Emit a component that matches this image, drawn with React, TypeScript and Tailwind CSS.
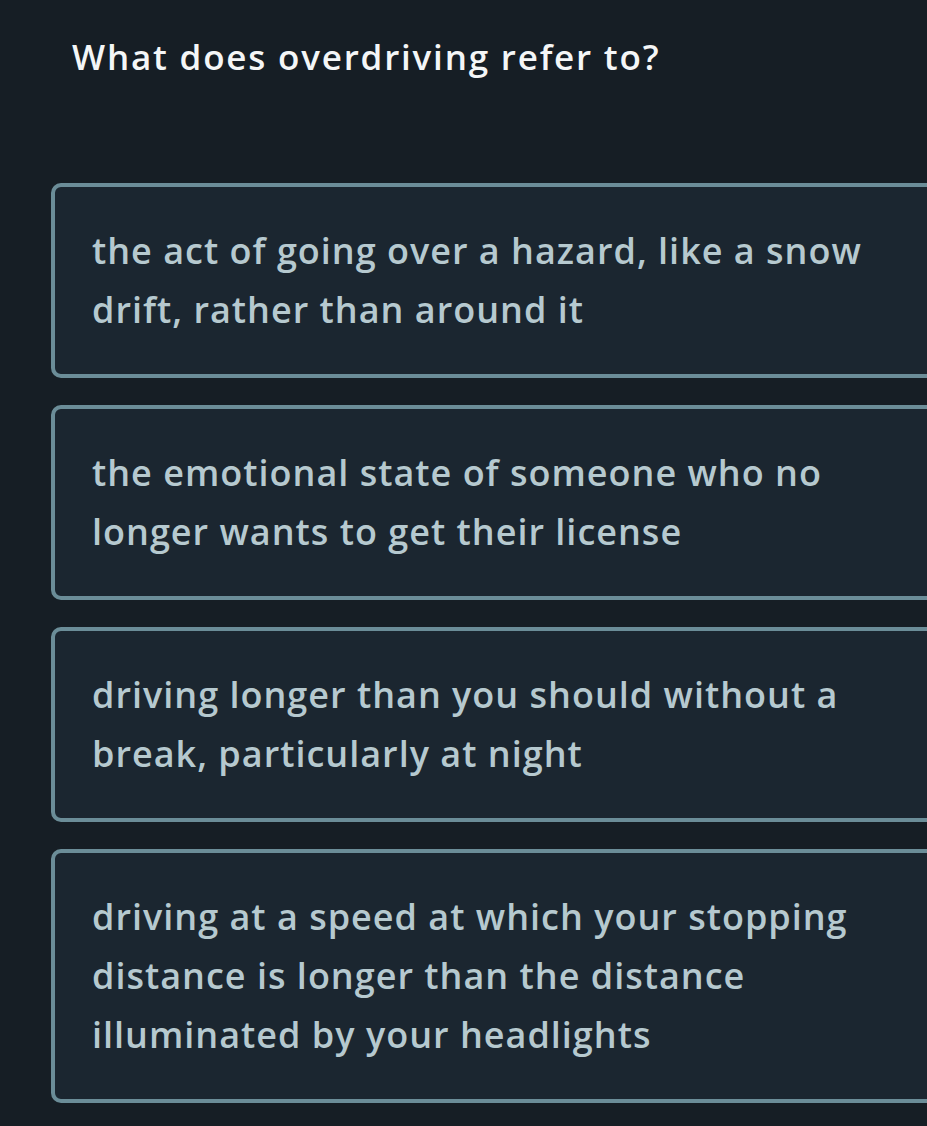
import React from "react";

const options: string[][] = [
  ["the act of going over a hazard, like a snow", "drift, rather than around it"],
  ["the emotional state of someone who no", "longer wants to get their license"],
  ["driving longer than you should without a", "break, particularly at night"],
  ["driving at a speed at which your stopping", "distance is longer than the distance", "illuminated by your headlights"],
];

export default function App() {
  return (
    <div
      className="min-h-screen w-full overflow-hidden bg-[#161e25] pl-[51px]"
      style={{ fontFamily: '"Open Sans", "Noto Sans", sans-serif' }}
    >
      <h1 className="pl-[21px] pt-[35px] text-[35px] leading-[44px] font-semibold tracking-[1.8px] text-[#f4f6f7] whitespace-nowrap">
        What does overdriving refer to?
      </h1>
      <div className="mt-[104px] flex flex-col gap-[27px]">
        {options.map((lines, i) => (
          <div
            key={i}
            className="w-[920px] rounded-[10px] border-4 border-[#6b8d98] bg-[#1b2630] pl-[37px] pt-[34px] pb-[35px] text-[36px] leading-[59px] font-semibold tracking-[1px] text-[#b6c9cf]"
          >
            {lines.map((l, j) => (
              <div key={j} className="whitespace-nowrap">
                {l}
              </div>
            ))}
          </div>
        ))}
      </div>
    </div>
  );
}
